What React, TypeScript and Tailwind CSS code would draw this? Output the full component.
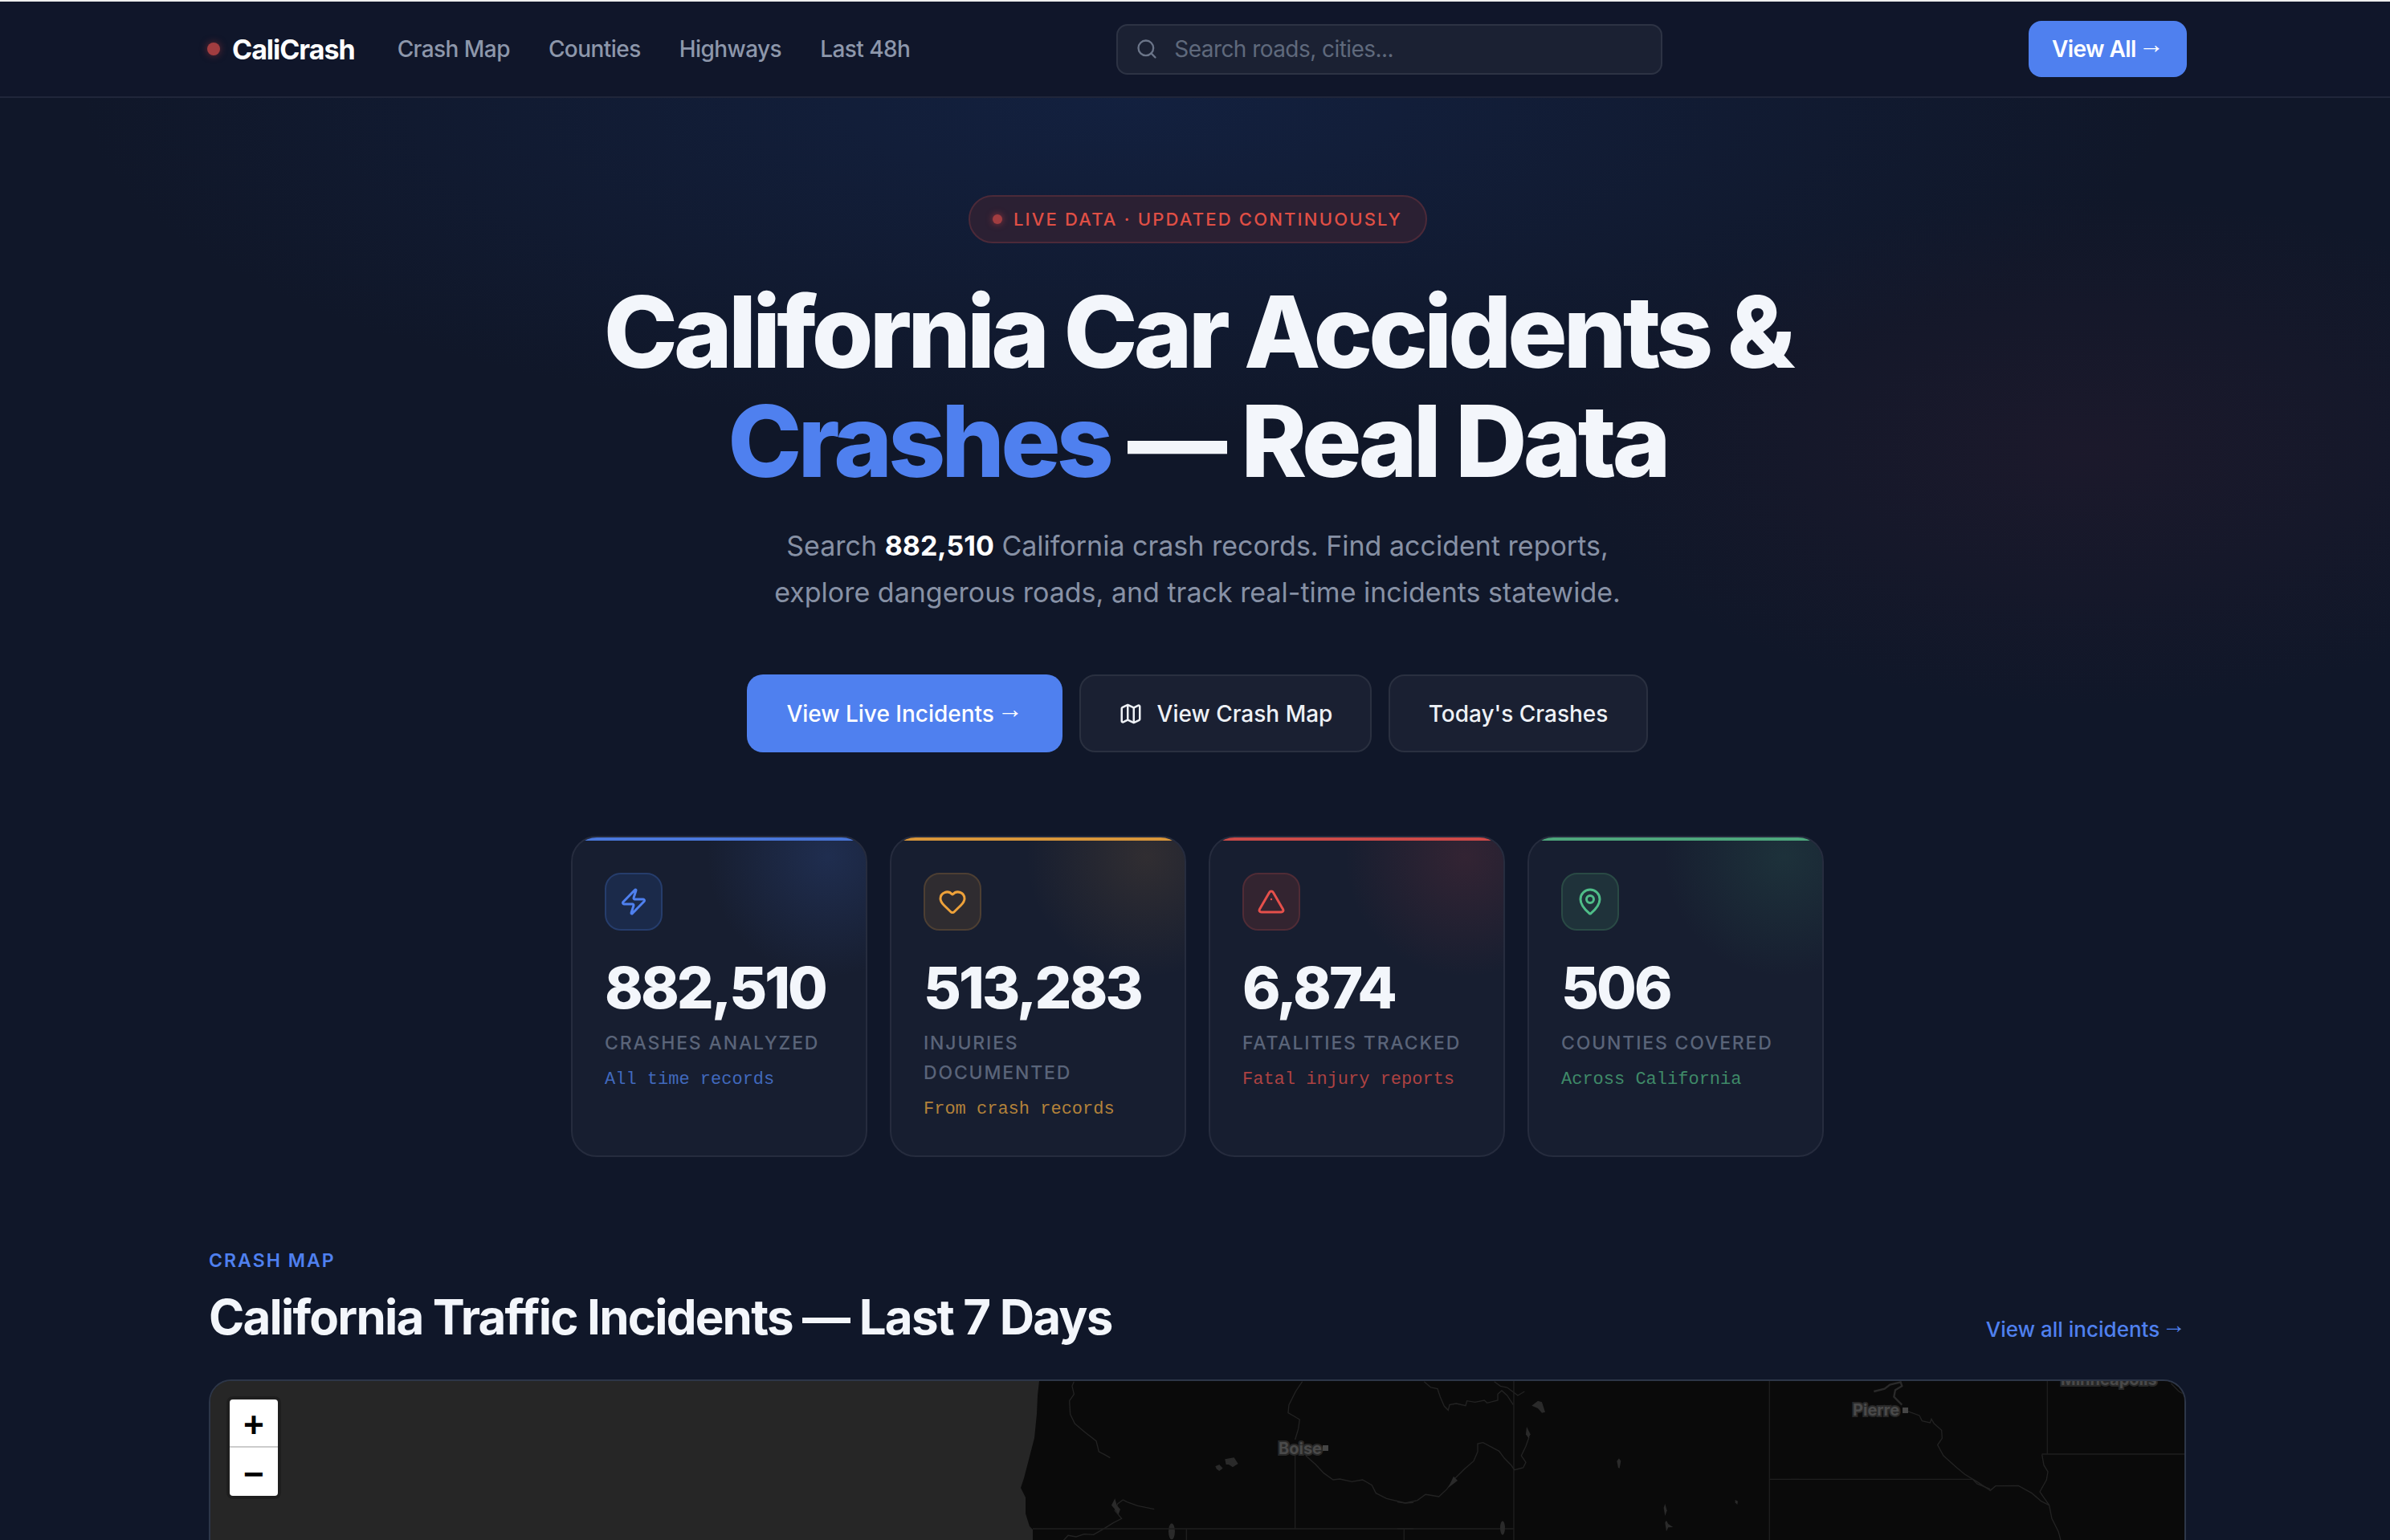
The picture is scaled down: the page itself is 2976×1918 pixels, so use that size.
import { Map as MapIcon, Search, Zap, Heart, MapPin } from 'lucide-react';

const sans = "font-['Inter','Liberation_Sans',sans-serif]";

function Arrow() {
  return <span className="inline-block -ml-[4px] -translate-y-[5px] text-[1.15em] leading-none font-['Liberation_Sans',sans-serif]">→</span>;
}

function TriangleDot({ className }: { className?: string }) {
  return (
    <svg viewBox="0 0 36 32" className={className} fill="none" stroke="currentColor" strokeWidth="3" strokeLinejoin="round">
      <path d="M15.6 4.4 3.4 25.4c-1 1.9.2 3.6 2.2 3.6h24.8c2 0 3.2-1.7 2.2-3.6L20.4 4.4c-1.1-1.9-3.7-1.9-4.8 0Z" />
      <circle cx="18" cy="13" r="1.2" fill="currentColor" stroke="none" />
    </svg>
  );
}

const cards = [
  {
    value: '882,510',
    label: 'Crashes Analyzed',
    sub: 'All time records',
    bar: 'bg-[#4a78dc]',
    glow: 'bg-[radial-gradient(ellipse_150px_150px_at_87%_6%,rgba(60,100,190,0.22),transparent)]',
    box: 'bg-[#1b2a4a] border-[#263d6c] text-[#4f80ef]',
    subColor: 'text-[#4169bd]',
    icon: <Zap size={36} strokeWidth={2} />,
  },
  {
    value: '513,283',
    label: 'Injuries Documented',
    sub: 'From crash records',
    bar: 'bg-[#d8963a]',
    glow: 'bg-[radial-gradient(ellipse_150px_150px_at_87%_6%,rgba(220,150,60,0.13),transparent)]',
    box: 'bg-[#2f2c30] border-[#4d3f33] text-[#eda13a]',
    subColor: 'text-[#b3823a]',
    icon: <Heart size={36} strokeWidth={2} />,
  },
  {
    value: '6,874',
    label: 'Fatalities Tracked',
    sub: 'Fatal injury reports',
    bar: 'bg-[#cc4a48]',
    glow: 'bg-[radial-gradient(ellipse_150px_150px_at_87%_6%,rgba(220,70,70,0.14),transparent)]',
    box: 'bg-[#332430] border-[#502c36] text-[#e5504b]',
    subColor: 'text-[#ad4242]',
    icon: <TriangleDot className="w-[36px] h-[32px]" />,
  },
  {
    value: '506',
    label: 'Counties Covered',
    sub: 'Across California',
    bar: 'bg-[#4ea67c]',
    glow: 'bg-[radial-gradient(ellipse_150px_150px_at_87%_6%,rgba(70,180,130,0.13),transparent)]',
    box: 'bg-[#1f323a] border-[#2a4a45] text-[#4fbd88]',
    subColor: 'text-[#3f8a68]',
    icon: <MapPin size={36} strokeWidth={2} />,
  },
];

function StatCard({ card }: { card: (typeof cards)[number] }) {
  return (
    <div className="relative overflow-hidden rounded-[32px] border-2 border-[#262c3e] bg-[#171e30] pt-[44px] px-[40px] pb-[42px]">
      <div className={`absolute top-0 inset-x-0 h-[4px] ${card.bar}`} />
      <div className={`absolute inset-0 ${card.glow}`} />
      <div className="relative">
        <div className={`w-[72px] h-[72px] rounded-[20px] border-2 flex items-center justify-center ${card.box}`}>{card.icon}</div>
        <div className="mt-[25px] text-[72px] leading-[92px] font-extrabold tracking-[-0.04em] text-[#f3f6fb]">{card.value}</div>
        <div className="mt-[5px] text-[23px] leading-[37px] font-medium uppercase tracking-[0.08em] text-[#5a6479]">{card.label}</div>
        <div className={`mt-[12px] font-['Liberation_Mono',monospace] text-[22px] leading-[30px] ${card.subColor}`}>{card.sub}</div>
      </div>
    </div>
  );
}

function CrashMap() {
  const line = 'fill-none stroke-[#232323] [stroke-width:4]';
  const border = 'fill-none stroke-[#1f1f1f] [stroke-width:4]';
  const lake = 'fill-[#2a2a2a]';
  const label = "fill-[#4a4a4a] stroke-[#282828] [stroke-width:4] [paint-order:stroke] font-['Inter',sans-serif] font-bold text-[20px]";
  return (
    <svg viewBox="262 1717 2458 596" className="block w-full h-full bg-[#262626]">
      {/* land */}
      <path className="fill-[#0a0a0a]" d="M1294 1717 1292 1735 1291 1758 1288 1788 1281 1815 1275 1838 1271 1850 1277 1862 1277 1882 1282 1898 1286 1902 1286 1915 1288 1918 1300 2000 1340 2150 1420 2320H2722V1717Z" />

      <g transform="translate(1260 1715) scale(0.3333)">
        <polyline className={line} points="232,8 225,25 232,55 215,80 218,130 235,165 270,195 315,230 325,270 345,280 367,293" />
        <polyline className={line} points="532,485 470,472 430,458 415,450 395,465 385,490 410,520 380,535 340,560 305,580 270,578 240,588 210,583 190,605" />
        <polygon className={lake} points="385,445 372,470 385,485 398,505 405,485 392,470" />
        <polygon className={lake} points="760,325 775,318 788,332 775,342 765,335" />
        <polygon className={lake} points="796,298 830,292 845,315 825,328 810,318 800,318" />
        <ellipse className={lake} cx="597" cy="568" rx="12" ry="30" />
        <polyline className={border} points="78,558 1500,558" />
        <polyline className={border} points="1058,285 1058,558" />
        <polyline className={border} points="652,558 652,609" />
        <polyline className={border} points="1465,558 1465,609" />
        <polyline className={line} points="1085,8 1060,45 1035,95 1032,125 1050,135 1075,150 1070,185 1058,225" />
        <polyline className={line} points="1098,285 1135,318 1165,350 1200,375 1225,372 1270,382 1310,375 1345,395 1360,425 1400,445 1470,462 1500,460" />
      </g>

      <text x="1592" y="1808" className={label}>Boise</text>
      <rect x="1647" y="1797" width="7" height="7" className="fill-[#454545]" />

      <g transform="translate(1740 1715) scale(0.3333)">
        <polyline className={line} points="100,8 125,30 150,35 160,65 175,100 190,115 195,95 220,90 255,98 260,80 290,85 325,78 335,88 375,78 375,55 390,42 410,60 433,95" />
        <polyline className={line} points="362,8 385,25 410,30 430,45 450,60 475,45" />
        <polyline className={border} points="435,6 435,609" />
        <polyline className={line} points="0,458 30,462 75,452 105,430 120,432 155,438 185,410 210,375 250,335 285,305 300,270 300,240 320,236 380,268 400,295 425,320 437,338 470,330 480,310 463,285 480,250 492,215" />
        <polygon className={lake} points="190,405 210,362 225,378" />
        <polygon className={lake} points="483,177 497,205 490,220 480,205" />
        <polygon className={lake} points="502,98 525,80 540,85 552,122 540,125 525,108" />
        <polyline className={border} points="0,558 435,558" />
        <ellipse className={lake} cx="393" cy="555" rx="9" ry="26" />
        <polygon className={lake} points="820,305 828,295 835,305 830,332 825,330" />
        <polygon className={lake} points="1000,465 1007,490 1000,510 995,480" />
        <polygon className={lake} points="1005,527 1012,540 1030,552 1012,553 1005,568 1000,535" />
        <polygon className={lake} points="1262,450 1272,455 1270,468 1262,460" />
        <polyline className={border} points="1390,6 1390,609" />
        <polyline className={border} points="1390,373 1500,373" />
      </g>

      <g transform="translate(2230 1715) scale(0.3333)">
        <polyline className={border} points="0,373 680,373" />
        <polyline className={line} points="438,120 480,135 490,155 520,162 525,148 535,165 563,190 565,220 548,245 570,285 620,330 650,355 700,385 745,415 765,398 850,397 900,425 935,455 965,470 975,520 1000,570 1010,609" />
        <polyline className={line} points="680,373 695,390 745,410" />
        <polyline className={line} points="930,420 955,375 960,345 945,320 938,280" />
        <polyline className={line} points="930,420 965,470" />
        <polyline className={border} points="938,279 1475,279" />
        <polyline className={border} points="958,6 958,279" />
        <polyline className="fill-none stroke-[#2a2a2a] [stroke-width:7]" points="310,45 350,35 370,20 410,10 415,25 390,40 385,65 405,85 415,95" />
        <polyline className={line} points="1420,15 1450,45 1475,60" />
      </g>

      <text x="2307" y="1760" className={label}>Pierre</text>
      <rect x="2369" y="1750" width="7" height="7" className="fill-[#454545]" />
      <text x="2566" y="1722" className={label}>Minneapolis</text>
    </svg>
  );
}

export default function App() {
  return (
    <div className={`${sans} h-screen overflow-hidden bg-[#101729] text-white border-t-2 border-[#eeeeee]`}>
      {/* top nav */}
      <nav className="h-[120px] border-b-2 border-[#20263a] bg-[#10162a] flex items-center pl-[258px] pr-[253px]">
        <div className="flex items-center">
          <span className="w-[16px] h-[16px] rounded-full bg-[#a23d40] shadow-[0_0_10px_rgba(200,60,60,0.5)]" />
          <span className="ml-[15px] text-[34px] font-bold tracking-[-0.03em] text-white">CaliCrash</span>
        </div>
        <div className="ml-[53px] flex items-center gap-[48px] text-[28px] font-medium tracking-[-0.02em] text-[#8d97ab]">
          <span>Crash Map</span>
          <span>Counties</span>
          <span>Highways</span>
          <span>Last 48h</span>
        </div>
        <div className="ml-[257px] w-[680px] h-[63px] rounded-[14px] border-2 border-[#2d3344] bg-[#1b2133] flex items-center pl-[22px]">
          <Search size={28} strokeWidth={2} className="text-[#6b7589]" />
          <input placeholder="Search roads, cities..." className="ml-[20px] flex-1 bg-transparent outline-none text-[28px] tracking-[-0.02em] placeholder:text-[#5f697c]" />
        </div>
        <button className="ml-auto h-[70px] w-[197px] rounded-[16px] bg-[#4f80ef] text-[28px] font-semibold tracking-[-0.02em] text-white">View All <Arrow /></button>
      </nav>

      {/* hero */}
      <header className="flex flex-col items-center pl-[6px] pt-[121px] pb-[112px] bg-[radial-gradient(ellipse_1300px_420px_at_1400px_0px,rgba(22,44,90,0.45),transparent),radial-gradient(ellipse_650px_320px_at_2600px_440px,rgba(110,40,60,0.12),transparent)]">
        <div className="h-[60px] w-[571px] rounded-full border-2 border-[#4c2a39] bg-[#2b2033] flex items-center justify-center">
          <span className="w-[12px] h-[12px] rounded-full bg-[#a23d40] shadow-[0_0_8px_rgba(220,70,70,0.6)]" />
          <span className="ml-[14px] text-[22px] font-medium uppercase tracking-[0.1em] text-[#e04f45]">Live Data · Updated Continuously</span>
        </div>
        <h1 className="mt-[42px] text-center text-[124px] leading-[136px] font-extrabold tracking-[-0.04em] text-[#f3f6fb]">
          California Car Accidents &amp;<br />
          <span className="text-[#4f80ef]">Crashes</span> — Real Data
        </h1>
        <p className="mt-[34px] text-center text-[34px] leading-[58px] text-[#8791a5]">
          Search <strong className="font-bold text-white">882,510</strong> California crash records. Find accident reports,<br />
          explore dangerous roads, and track real-time incidents statewide.
        </p>
        <div className="mt-[73px] flex gap-[21px] text-[28px] font-medium">
          <button className="w-[393px] h-[97px] rounded-[20px] bg-[#4f80ef] text-white">View Live Incidents <Arrow /></button>
          <button className="w-[364px] h-[97px] rounded-[20px] border-2 border-[#2a3040] bg-[#1a2032] text-[#eef1f6] flex items-center justify-center gap-[18px]">
            <MapIcon size={30} strokeWidth={2} />
            View Crash Map
          </button>
          <button className="w-[323px] h-[97px] rounded-[20px] border-2 border-[#2a3040] bg-[#1a2032] text-[#eef1f6]">Today's Crashes</button>
        </div>
        <div className="mt-[104px] w-[1560px] grid grid-cols-4 gap-[28px]">
          {cards.map((c) => (
            <StatCard key={c.value} card={c} />
          ))}
        </div>
      </header>

      {/* map section */}
      <section className="ml-[260px] w-[2462px]">
        <div className="mt-[2px] text-[23px] leading-[30px] font-semibold uppercase tracking-[0.09em] text-[#4f80ef]">Crash Map</div>
        <div className="mt-[16px] flex items-center justify-between">
          <h2 className="text-[60px] leading-[78px] font-bold tracking-[-0.03em] text-[#f3f6fb]">California Traffic Incidents — Last 7 Days</h2>
          <a className="mt-[30px] text-[26px] font-medium text-[#4f80ef]">View all incidents <Arrow /></a>
        </div>
        <div className="relative mt-[39px] h-[600px] overflow-hidden rounded-[28px] border-2 border-[#2d3648] bg-[#262626]">
          <CrashMap />
          <div className="absolute left-[20px] top-[19px] w-[68px] rounded-[8px] border-4 border-black/20 bg-clip-padding">
            <div className="h-[60px] pt-[12px] rounded-t-[4px] border-b-2 border-[#cccccc] bg-white flex items-center justify-center font-['Liberation_Mono',monospace] text-[44px] font-bold leading-none text-black">+</div>
            <div className="h-[60px] pt-[12px] rounded-b-[4px] bg-white flex items-center justify-center font-['Liberation_Mono',monospace] text-[44px] font-bold leading-none text-black">−</div>
          </div>
        </div>
      </section>
    </div>
  );
}
